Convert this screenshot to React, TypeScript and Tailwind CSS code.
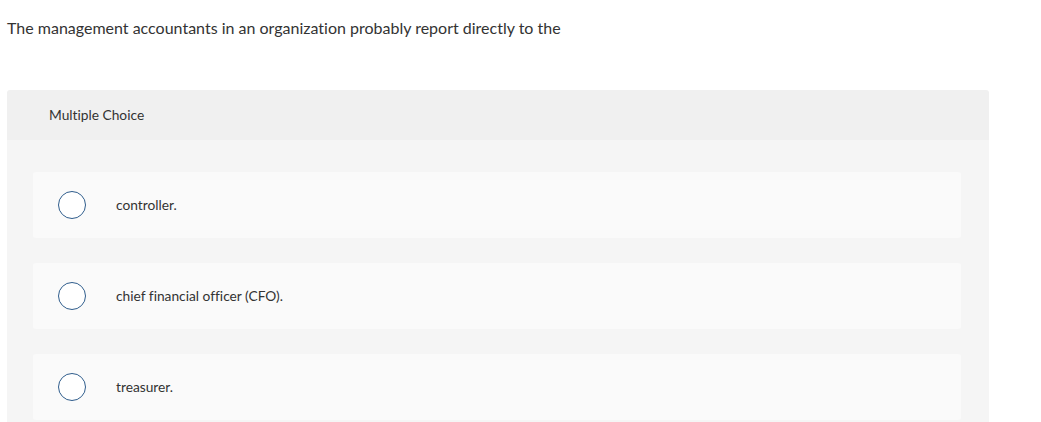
const choices = ['controller.', 'chief financial officer (CFO).', 'treasurer.'];

const App = () => {
  return (
    <div className="w-[1041px] h-[422px] overflow-hidden bg-white font-['Lato','Liberation_Sans',sans-serif] text-[#333] [font-variant-ligatures:none]">
      <p className="pl-[7px] pt-[18px] text-[16px] leading-[20px]">
        The management accountants in an organization probably report directly to the
      </p>
      <div className="ml-[7px] mt-[52px] w-[982px] rounded-t-[3px] overflow-hidden">
        <div className="h-[50px] bg-[#f0f0f0] flex items-center pl-[42px] text-[13.75px]">
          Multiple Choice
        </div>
        <div className="bg-[#f5f5f5] pl-[26px] pr-[28px] pt-[32px] pb-[24px] flex flex-col gap-[25px]">
          {choices.map((c) => (
            <div
              key={c}
              className="h-[66px] bg-[#fafafa] rounded-[3px] flex items-center pl-[25px]"
            >
              <span className="w-[28px] h-[28px] rounded-full border-[1.5px] border-[#2f5d8c] bg-white shrink-0" />
              <span className="ml-[30px] text-[13.75px]">{c}</span>
            </div>
          ))}
        </div>
      </div>
    </div>
  );
};

export default App;
